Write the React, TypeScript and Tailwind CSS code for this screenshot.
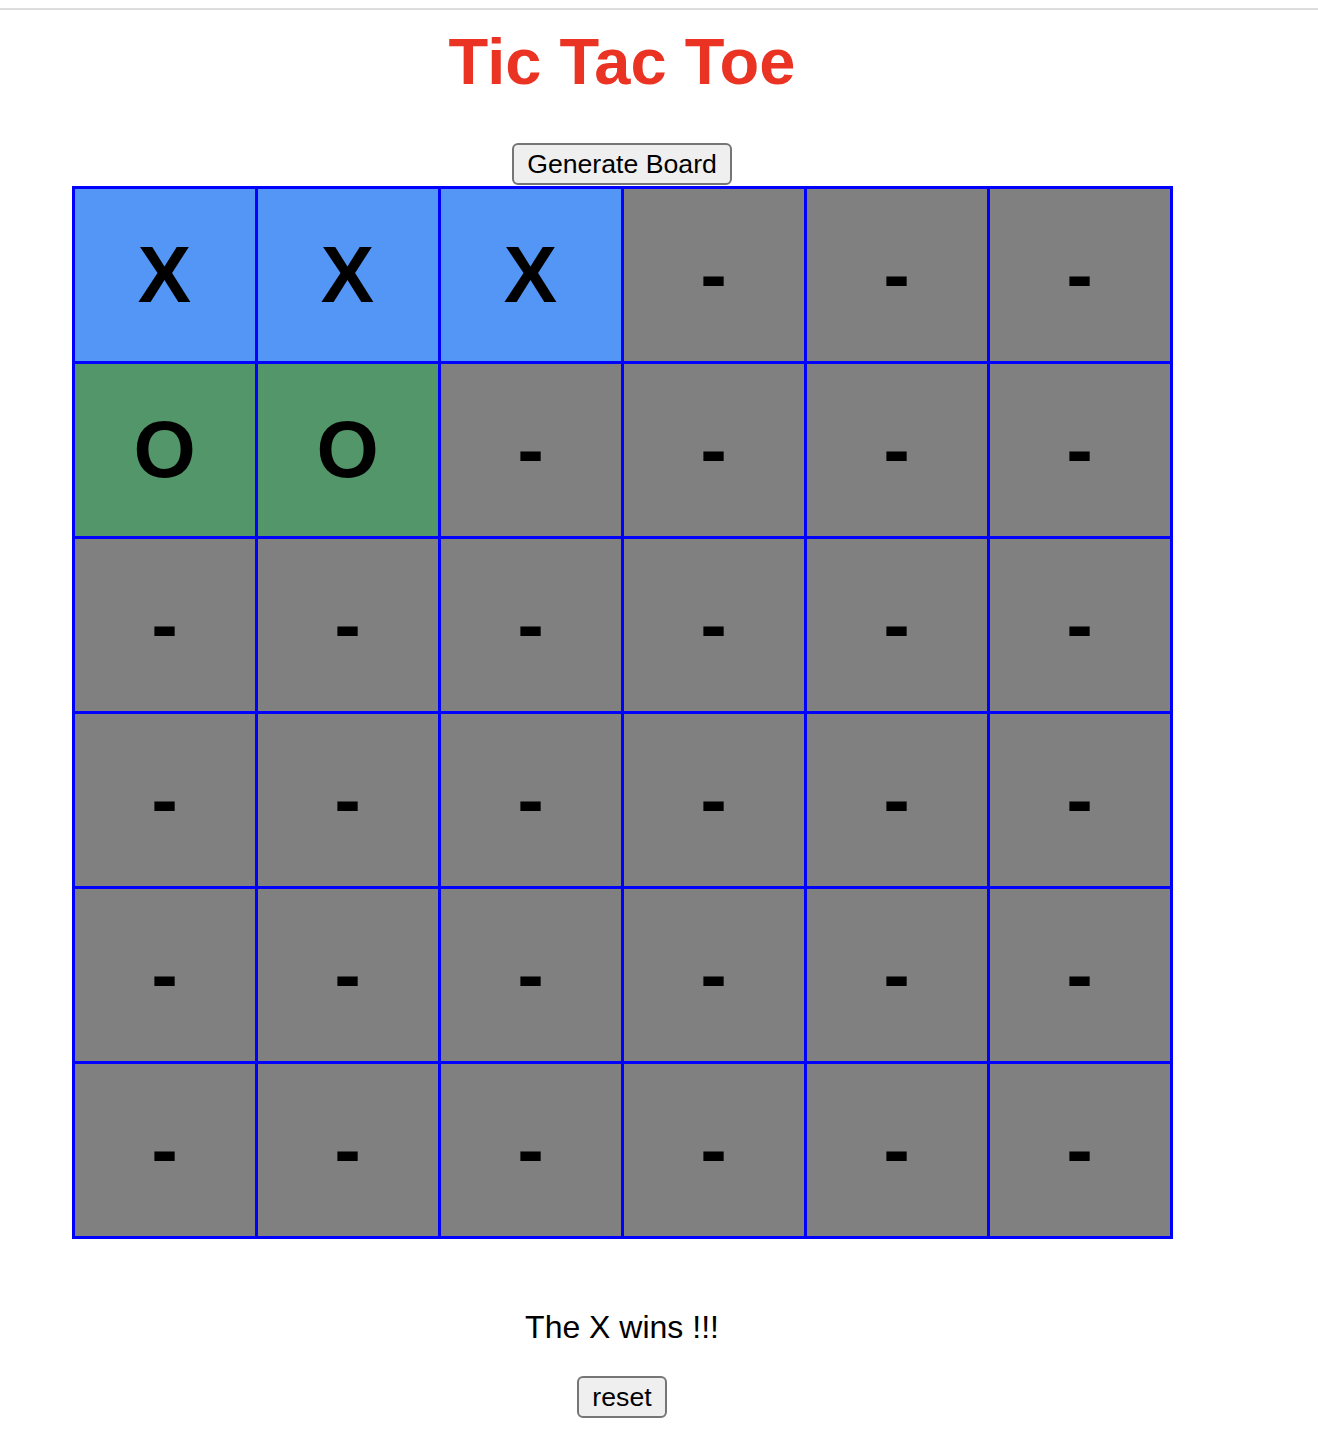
import React from "react";

type Cell = { v: string; c: "x" | "o" | "e" };

const board: Cell[][] = Array.from({ length: 6 }, (_, r) =>
  Array.from({ length: 6 }, (_, c) => {
    if (r === 0 && c < 3) return { v: "X", c: "x" } as Cell;
    if (r === 1 && c < 2) return { v: "O", c: "o" } as Cell;
    return { v: "-", c: "e" } as Cell;
  })
);

const bgFor = (c: Cell["c"]) =>
  c === "x" ? "bg-[#5396f6]" : c === "o" ? "bg-[#52966a]" : "bg-[#808080]";

export default function App() {
  return (
    <div className="min-h-[1438px] bg-white text-black" style={{ fontFamily: '"Liberation Sans", Arial, sans-serif' }}>
      <div className="h-[2px] mt-[8px] w-full bg-[#dddddd]" />
      <div className="ml-[72px] w-[1100px] flex flex-col items-center">
        <h1 className="mt-[15px] text-[65px] leading-[74px] font-bold text-[#ea3323]">Tic Tac Toe</h1>
        <button className="mt-[44px] h-[42px] px-[13px] text-[26.67px] leading-[30px] bg-[#efefef] border-2 border-[#767676] rounded-[6px] text-black">
          Generate Board
        </button>
        <div className="mt-[1px] w-[1101px] grid grid-cols-6 gap-[3px] p-[3px] bg-[#0000ff]">
          {board.flat().map((cell, i) => (
            <div
              key={i}
              className={`h-[172px] flex items-center justify-center ${bgFor(cell.c)}`}
            >
              <span className="text-[80px] leading-[80px] font-bold text-black">{cell.v}</span>
            </div>
          ))}
        </div>
        <p className="mt-[70px] text-[32px] leading-[37px]">The X wins !!!</p>
        <button className="mt-[30px] h-[42px] px-[13px] text-[26.67px] leading-[30px] bg-[#efefef] border-2 border-[#767676] rounded-[6px] text-black">
          reset
        </button>
      </div>
    </div>
  );
}
